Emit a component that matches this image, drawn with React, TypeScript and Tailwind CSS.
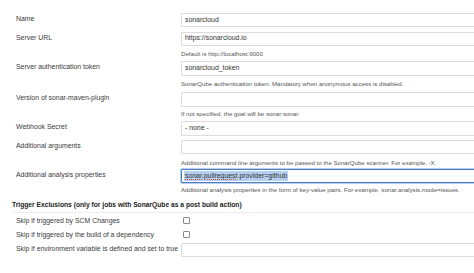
import React from "react";

const labelCls =
  "w-[165px] shrink-0 text-[6.9px] leading-[11px] text-[#3a3a3a] whitespace-nowrap";
const inputCls =
  "w-[310px] shrink-0 border border-[#dcdcdc] rounded-[1px] bg-white pl-[3px] text-[6.9px] text-[#333333] flex items-center whitespace-nowrap";
const helpCls = "pl-[165px] text-[6.12px] text-[#555555] whitespace-nowrap flex items-center";

function Row({ label, value, h = "h-[14.5px]", mt = "" }: { label: string; value?: string; h?: string; mt?: string }) {
  return (
    <div className={`flex items-start ${mt}`}>
      <div className={labelCls}>{label}</div>
      <div className={`${inputCls} ${h}`}>{value}</div>
    </div>
  );
}

export default function App() {
  return (
    <div
      className="w-[474px] h-[273px] overflow-hidden bg-white relative"
      style={{ fontFamily: '"Liberation Sans", Arial, sans-serif' }}
    >
      <div className="pl-[16px] pt-[12.5px] flex flex-col">
        <Row label="Name" value="sonarcloud" h="h-[14.5px]" />
        <Row label="Server URL" value="https://sonarcloud.io" h="h-[14.2px]" mt="mt-[4.5px]" />
        <div className={`${helpCls} h-[15px]`}>Default is http://localhost:9000</div>
        <Row label="Server authentication token" value="sonarcloud_token" h="h-[15px]" />
        <div className={`${helpCls} h-[16.3px]`}>
          SonarQube authentication token. Mandatory when anonymous access is disabled.
        </div>
        <Row label="Version of sonar-maven-plugin" h="h-[15px]" />
        <div className={`${helpCls} h-[14px]`}>If not specified, the goal will be sonar:sonar.</div>
        <Row label="Webhook Secret" value="- none -" h="h-[15px]" />
        <Row label="Additional arguments" h="h-[13.5px]" mt="mt-[4.5px]" />
        <div className={`${helpCls} h-[15px] pt-[2px]`}>
          Additional command line arguments to be passed to the SonarQube scanner. For example, -X.
        </div>
        <div className="flex items-start">
          <div className={labelCls}>Additional analysis properties</div>
          <div className="w-[310px] shrink-0 h-[14px] border border-[#4a7dc0] rounded-[1px] bg-white pl-[2px] text-[6.9px] text-[#333333] flex items-center whitespace-nowrap shadow-[0_0_0_1px_#b9d0ee]">
            <span className="bg-[#b5cff0] px-[1px] leading-[10px]">
              <span className="underline decoration-dotted decoration-[#d04040]">sonar.pullrequest</span>
              .provider=github
            </span>
          </div>
        </div>
        <div className={`${helpCls} h-[14px]`}>
          Additional analysis properties in the form of key-value pairs. For example, sonar.analysis.mode=issues.
        </div>
      </div>
      <div className="ml-[12px] h-[16px] border-b border-[#eeeeee] flex items-end pb-[1.5px]">
        <div className="text-[6.7px] font-bold text-[#222222] whitespace-nowrap leading-[10px]">
          Trigger Exclusions (only for jobs with SonarQube as a post build action)
        </div>
      </div>
      <div className="pl-[16px] flex flex-col">
        <div className="flex items-center h-[14.5px] pt-[0.5px]">
          <div className={labelCls}>Skip if triggered by SCM Changes</div>
          <div className="ml-[2px] w-[6.5px] h-[6.5px] border border-[#8a8a8a] rounded-[1px] bg-white" />
        </div>
        <div className="flex items-center h-[14px]">
          <div className={labelCls}>Skip if triggered by the build of a dependency</div>
          <div className="ml-[2px] w-[6.5px] h-[6.5px] border border-[#8a8a8a] rounded-[1px] bg-white" />
        </div>
        <div className="flex items-start mt-[1.5px]">
          <div className={`${labelCls} leading-[9px]`}>Skip if environment variable is defined and set to true</div>
          <div className={`${inputCls} h-[14px]`} />
        </div>
      </div>
    </div>
  );
}
